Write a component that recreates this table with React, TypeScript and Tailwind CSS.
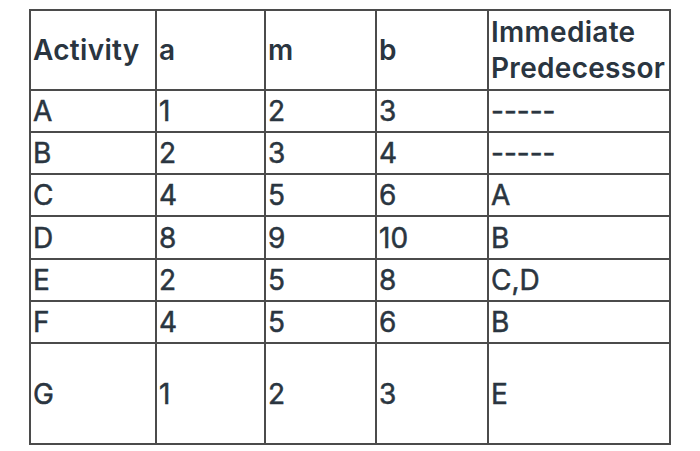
import React from "react";

const rows: { h: string; cells: string[] }[] = [
  { h: "h-[42px]", cells: ["A", "1", "2", "3", "-----"] },
  { h: "h-[42px]", cells: ["B", "2", "3", "4", "-----"] },
  { h: "h-[42px]", cells: ["C", "4", "5", "6", "A"] },
  { h: "h-[43px]", cells: ["D", "8", "9", "10", "B"] },
  { h: "h-[42px]", cells: ["E", "2", "5", "8", "C,D"] },
  { h: "h-[42px]", cells: ["F", "4", "5", "6", "B"] },
  { h: "h-[101px]", cells: ["G", "1", "2", "3", "E"] },
];

export default function App() {
  return (
    <div
      className="w-[700px] h-[451px] bg-white pt-[9px] pl-[29px]"
      style={{ fontFamily: "Inter, 'Noto Sans', sans-serif" }}
    >
      <table className="table-fixed border-collapse border-2 border-[#4b4b4b] text-[#2a3540] text-[28px] leading-[36px]">
        <colgroup>
          <col className="w-[126px]" />
          <col className="w-[109px]" />
          <col className="w-[111px]" />
          <col className="w-[112px]" />
          <col className="w-[182px]" />
        </colgroup>
        <thead>
          <tr className="h-[80px] font-semibold tracking-[0.3px]">
            <td className="border-2 border-[#4b4b4b] px-[2px] align-middle">Activity</td>
            <td className="border-2 border-[#4b4b4b] px-[2px] align-middle">a</td>
            <td className="border-2 border-[#4b4b4b] px-[2px] align-middle">m</td>
            <td className="border-2 border-[#4b4b4b] px-[2px] align-middle">b</td>
            <td className="border-2 border-[#4b4b4b] px-[2px] align-middle">
              Immediate
              <br />
              Predecessor
            </td>
          </tr>
        </thead>
        <tbody className="[-webkit-text-stroke:0.5px_#2a3540]">
          {rows.map((r, i) => (
            <tr key={i} className={r.h}>
              {r.cells.map((c, j) => (
                <td
                  key={j}
                  className="border-2 border-[#4b4b4b] px-[2px] align-middle"
                >
                  {c}
                </td>
              ))}
            </tr>
          ))}
        </tbody>
      </table>
    </div>
  );
}
